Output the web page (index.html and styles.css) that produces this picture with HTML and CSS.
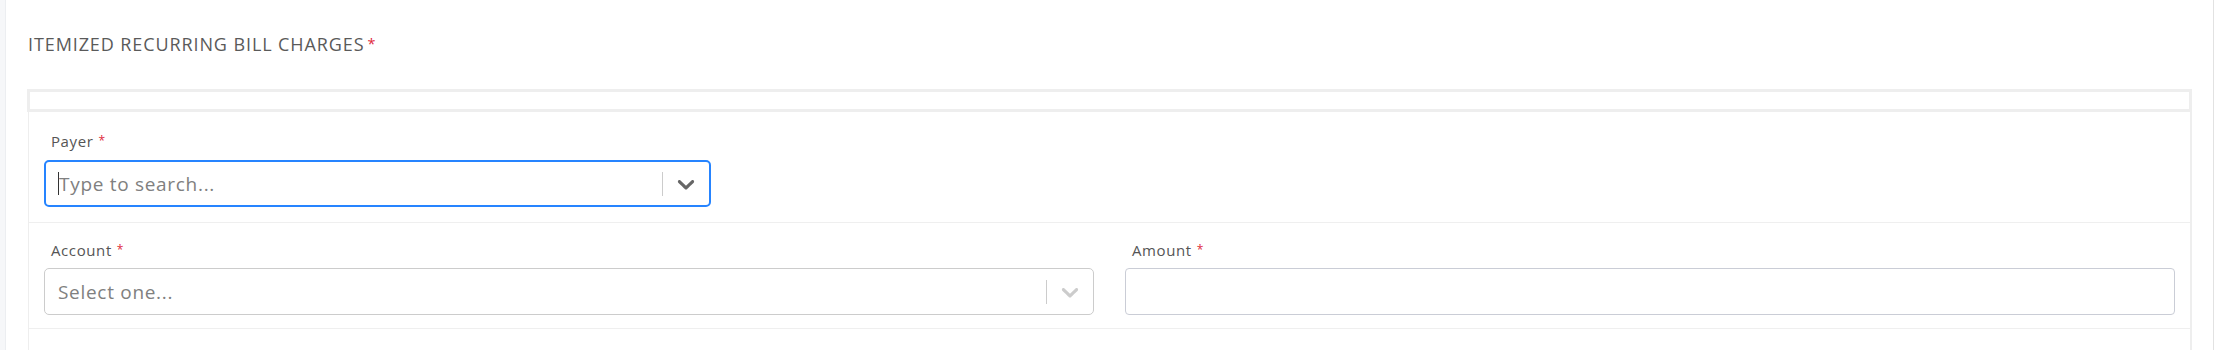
FILE: index.html
```html
<!DOCTYPE html>
<html lang="en">
<head>
<meta charset="utf-8">
<title>Itemized Recurring Bill Charges</title>
<link rel="stylesheet" href="styles.css">
</head>
<body>
<div class="page">
  <h2 class="section-title">ITEMIZED RECURRING BILL CHARGES<span class="req">*</span></h2>
  <div class="charges">
    <div class="charges-head"></div>
    <div class="charges-body">
      <div class="row">
        <div class="field field-payer">
          <label class="label">Payer<span class="req">*</span></label>
          <div class="control control-focused">
            <div class="value"><span class="caret"></span><span class="placeholder">Type to search...</span></div>
            <span class="sep"></span>
            <span class="indicator">
              <svg class="chev chev-dark" viewBox="0 0 20 20" width="28" height="28" aria-hidden="true"><path d="M4.516 7.548c0.436-0.446 1.043-0.481 1.576 0l3.908 3.747 3.908-3.747c0.533-0.481 1.141-0.446 1.574 0 0.436 0.445 0.408 1.197 0 1.615-0.406 0.418-4.695 4.502-4.695 4.502-0.217 0.223-0.502 0.335-0.787 0.335s-0.57-0.112-0.789-0.335c0 0-4.287-4.084-4.695-4.502s-0.436-1.17 0-1.615z"/></svg>
            </span>
          </div>
        </div>
      </div>
      <div class="row row-two">
        <div class="field">
          <label class="label">Account<span class="req">*</span></label>
          <div class="control">
            <div class="value"><span class="placeholder">Select one...</span></div>
            <span class="sep"></span>
            <span class="indicator">
              <svg class="chev chev-light" viewBox="0 0 20 20" width="28" height="28" aria-hidden="true"><path d="M4.516 7.548c0.436-0.446 1.043-0.481 1.576 0l3.908 3.747 3.908-3.747c0.533-0.481 1.141-0.446 1.574 0 0.436 0.445 0.408 1.197 0 1.615-0.406 0.418-4.695 4.502-4.695 4.502-0.217 0.223-0.502 0.335-0.787 0.335s-0.57-0.112-0.789-0.335c0 0-4.287-4.084-4.695-4.502s-0.436-1.17 0-1.615z"/></svg>
            </span>
          </div>
        </div>
        <div class="field">
          <label class="label">Amount<span class="req">*</span></label>
          <div class="text-input"></div>
        </div>
      </div>
      <div class="row row-empty"></div>
    </div>
  </div>
</div>
</body>
</html>
```

FILE: styles.css
```css
html, body {
  margin: 0;
  padding: 0;
  height: 100%;
  overflow: hidden;
}
body {
  background: #f6f7f9;
  font-family: "Open Sans", "Liberation Sans", sans-serif;
}
.page {
  box-sizing: border-box;
  margin-left: 5px;
  height: 100%;
  background: #ffffff;
  border-left: 1px solid #eceef1;
  border-right: 1px solid #e2e2e2;
  padding: 32px 21px 0 21px;
}
.section-title {
  margin: 0 0 33px 1px;
  font-size: 18px;
  line-height: 24px;
  font-weight: 400;
  letter-spacing: 0.9px;
  color: #5a5a5a;
}
.req {
  margin-left: 3px;
  color: #e0283c;
  letter-spacing: 0;
  font-size: 0.8em;
  vertical-align: 2px;
}
.charges-head {
  height: 17px;
  border: 3px solid #eeeeee;
}
.charges-body {
  margin-left: 1px;
  border-left: 1px solid #eeeeee;
  border-right: 2px solid #eeeeee;
}
.row {
  display: flex;
  gap: 31px;
  padding: 19px 15px 15px 15px;
  border-bottom: 1px solid #efefef;
}
.row-two {
  padding-top: 17px;
  padding-bottom: 13px;
}
.row-empty {
  height: 40px;
  padding: 0;
  border-bottom: none;
}
.field {
  flex: 1;
  display: flex;
  flex-direction: column;
}
.field-payer {
  flex: 0 0 667px;
}
.label {
  display: block;
  margin: 0 0 9px 7px;
  font-size: 15px;
  line-height: 20px;
  letter-spacing: 0.6px;
  color: #555555;
}
.label .req {
  margin-left: 5px;
}
.row-two .label {
  margin-bottom: 8px;
}
.control {
  box-sizing: border-box;
  display: flex;
  align-items: center;
  height: 47px;
  border: 1px solid #cccccc;
  border-radius: 5px;
  background: #ffffff;
}
.control-focused {
  border: 2px solid #2684ff;
}
.value {
  flex: 1;
  display: flex;
  align-items: center;
  padding-left: 13px;
}
.control-focused .value {
  padding-left: 12px;
}
.caret {
  width: 1px;
  height: 23px;
  background: #333333;
}
.placeholder {
  font-size: 19px;
  letter-spacing: 0.7px;
  color: #808080;
  line-height: 24px;
}
.sep {
  width: 1px;
  height: 24px;
  background: #cccccc;
}
.indicator {
  width: 46px;
  display: flex;
  align-items: center;
  justify-content: center;
}
.chev-dark {
  fill: #666666;
}
.chev-light {
  fill: #cccccc;
}
.text-input {
  box-sizing: border-box;
  height: 47px;
  border: 1px solid #cacdd6;
  border-radius: 4px;
  background: #ffffff;
}
```
